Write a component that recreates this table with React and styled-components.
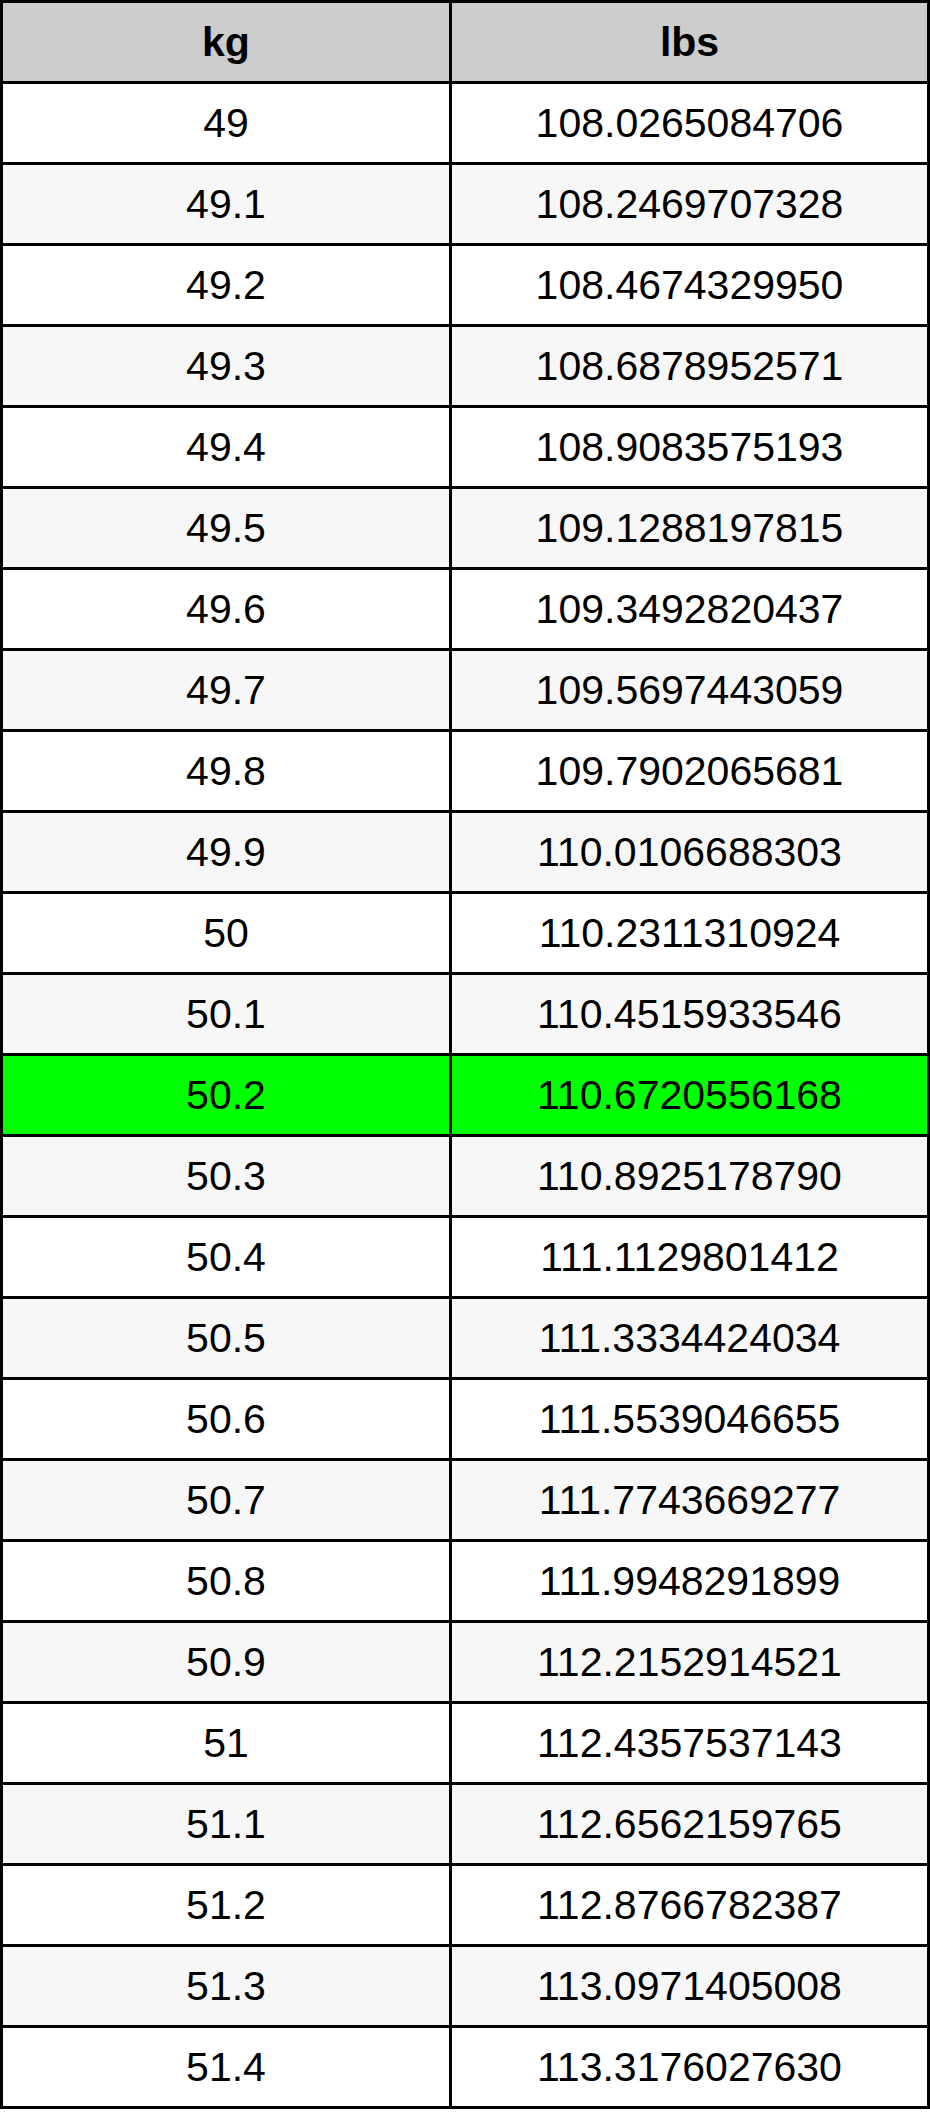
import React from 'react'
import styled, { createGlobalStyle } from 'styled-components'

const GlobalStyle = createGlobalStyle`
  html, body {
    margin: 0;
    padding: 0;
    background: #fff;
  }
  body {
    font-family: "Liberation Sans", Arial, Helvetica, sans-serif;
  }
`

const rows = [
  ['49', '108.0265084706'],
  ['49.1', '108.2469707328'],
  ['49.2', '108.4674329950'],
  ['49.3', '108.6878952571'],
  ['49.4', '108.9083575193'],
  ['49.5', '109.1288197815'],
  ['49.6', '109.3492820437'],
  ['49.7', '109.5697443059'],
  ['49.8', '109.7902065681'],
  ['49.9', '110.0106688303'],
  ['50', '110.2311310924'],
  ['50.1', '110.4515933546'],
  ['50.2', '110.6720556168'],
  ['50.3', '110.8925178790'],
  ['50.4', '111.1129801412'],
  ['50.5', '111.3334424034'],
  ['50.6', '111.5539046655'],
  ['50.7', '111.7743669277'],
  ['50.8', '111.9948291899'],
  ['50.9', '112.2152914521'],
  ['51', '112.4357537143'],
  ['51.1', '112.6562159765'],
  ['51.2', '112.8766782387'],
  ['51.3', '113.0971405008'],
  ['51.4', '113.3176027630'],
]

const highlighted = '50.2'

const Table = styled.table`
  width: 930px;
  border-collapse: collapse;
  table-layout: fixed;
  border: 3px solid #000;
`

const HeadCell = styled.th`
  height: 78px;
  padding: 0;
  border: 3px solid #000;
  background: #cccccc;
  color: #000;
  font-size: 41px;
  font-weight: bold;
  text-align: center;
  vertical-align: middle;
`

const Row = styled.tr`
  background: ${props => props.active ? '#00ff00' : props.odd ? '#f7f7f7' : '#ffffff'};
`

const Cell = styled.td`
  height: 78px;
  padding: 0;
  border: 3px solid #000;
  color: #000;
  font-size: 41px;
  text-align: center;
  vertical-align: middle;
`

export default function App() {
  return <>
    <GlobalStyle />
    <Table>
      <colgroup>
        <col style={{ width: '449px' }} />
        <col />
      </colgroup>
      <thead>
        <tr>
          <HeadCell>kg</HeadCell>
          <HeadCell>lbs</HeadCell>
        </tr>
      </thead>
      <tbody>
        {rows.map(([kg, lbs], index) =>
          <Row key={kg} odd={index % 2 === 1} active={kg === highlighted}>
            <Cell>{kg}</Cell>
            <Cell>{lbs}</Cell>
          </Row>
        )}
      </tbody>
    </Table>
  </>
}
